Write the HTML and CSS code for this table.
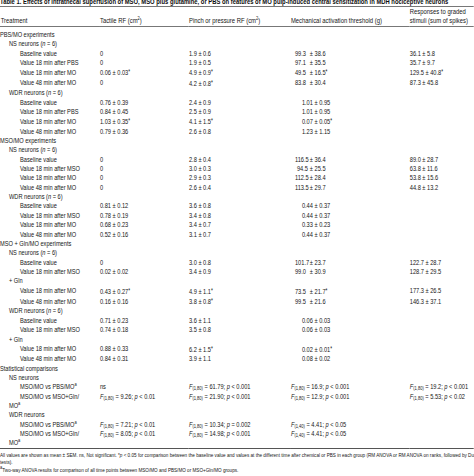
FILE: index.html
```html
<!DOCTYPE html>
<html>
<head>
<meta charset="utf-8">
<link rel="stylesheet" href="styles.css">
</head>
<body>
<div class="sheet">
<div class="page">
  <div class="title">Table 1. Effects of intrathecal superfusion of MSO, MSO plus glutamine, or PBS on features of MO pulp-induced central sensitization in MDH nociceptive neurons</div>
  <table class="data">
    <colgroup>
      <col class="c1"><col class="c2"><col class="c3"><col class="c4"><col class="c5">
    </colgroup>
    <thead>
      <tr>
        <th>Treatment</th>
        <th>Tactile RF (cm<sup>2</sup>)</th>
        <th>Pinch or pressure RF (cm<sup>2</sup>)</th>
        <th>Mechanical activation threshold (g)</th>
        <th>Responses to graded<br>stimuli (sum of spikes)</th>
      </tr>
    </thead>
    <tbody>
      <tr class="first"><td class="l0">PBS/MO experiments</td><td></td><td></td><td></td><td></td></tr>
      <tr><td class="l1">NS neurons (<i>n</i> = 6)</td><td></td><td></td><td></td><td></td></tr>
      <tr><td class="l2">Baseline value</td><td>0</td><td>1.9 ± 0.6</td><td class="th"><span class="n">99.3</span>± 38.6</td><td>36.1 ± 5.8</td></tr>
      <tr><td class="l2">Value 18 min after PBS</td><td>0</td><td>1.9 ± 0.5</td><td class="th"><span class="n">97.1</span>± 35.5</td><td>35.7 ± 9.7</td></tr>
      <tr><td class="l2">Value 18 min after MO</td><td>0.06 ± 0.03<span class="ast">*</span></td><td>4.9 ± 0.9<span class="ast">*</span></td><td class="th"><span class="n">49.5</span>± 16.5<span class="ast">*</span></td><td>129.5 ± 40.8<span class="ast">*</span></td></tr>
      <tr><td class="l2">Value 48 min after MO</td><td>0</td><td>4.2 ± 0.8<span class="ast">*</span></td><td class="th"><span class="n">83.8</span>± 30.4</td><td>87.3 ± 45.8</td></tr>
      <tr><td class="l1">WDR neurons (<i>n</i> = 6)</td><td></td><td></td><td></td><td></td></tr>
      <tr><td class="l2">Baseline value</td><td>0.76 ± 0.39</td><td>2.4 ± 0.9</td><td class="sm">1.01 ± 0.95</td><td></td></tr>
      <tr><td class="l2">Value 18 min after PBS</td><td>0.84 ± 0.45</td><td>2.5 ± 0.9</td><td class="sm">1.01 ± 0.95</td><td></td></tr>
      <tr><td class="l2">Value 18 min after MO</td><td>1.03 ± 0.35<span class="ast">*</span></td><td>4.1 ± 1.5<span class="ast">*</span></td><td class="sm">0.07 ± 0.05<span class="ast">*</span></td><td></td></tr>
      <tr><td class="l2">Value 48 min after MO</td><td>0.79 ± 0.36</td><td>2.6 ± 0.8</td><td class="sm">1.23 ± 1.15</td><td></td></tr>
      <tr><td class="l0">MSO/MO experiments</td><td></td><td></td><td></td><td></td></tr>
      <tr><td class="l1">NS neurons (<i>n</i> = 6)</td><td></td><td></td><td></td><td></td></tr>
      <tr><td class="l2">Baseline value</td><td>0</td><td>2.8 ± 0.4</td><td class="th"><span class="n">116.5</span>± 36.4</td><td>89.0 ± 28.7</td></tr>
      <tr><td class="l2">Value 18 min after MSO</td><td>0</td><td>3.0 ± 0.3</td><td class="th"><span class="n r">94.5</span>± 25.5</td><td>63.8 ± 11.6</td></tr>
      <tr><td class="l2">Value 18 min after MO</td><td>0</td><td>2.9 ± 0.3</td><td class="th"><span class="n">112.5</span>± 28.4</td><td>53.8 ± 15.6</td></tr>
      <tr><td class="l2">Value 48 min after MO</td><td>0</td><td>2.6 ± 0.4</td><td class="th"><span class="n">113.5</span>± 29.7</td><td>44.8 ± 13.2</td></tr>
      <tr><td class="l1">WDR neurons (<i>n</i> = 6)</td><td></td><td></td><td></td><td></td></tr>
      <tr><td class="l2">Baseline value</td><td>0.81 ± 0.12</td><td>3.6 ± 0.8</td><td class="sm">0.44 ± 0.37</td><td></td></tr>
      <tr><td class="l2">Value 18 min after MSO</td><td>0.78 ± 0.19</td><td>3.4 ± 0.8</td><td class="sm">0.44 ± 0.37</td><td></td></tr>
      <tr><td class="l2">Value 18 min after MO</td><td>0.68 ± 0.23</td><td>3.4 ± 0.7</td><td class="sm">0.33 ± 0.23</td><td></td></tr>
      <tr><td class="l2">Value 48 min after MO</td><td>0.52 ± 0.16</td><td>3.1 ± 0.7</td><td class="sm">0.44 ± 0.37</td><td></td></tr>
      <tr><td class="l0">MSO + Gln/MO experiments</td><td></td><td></td><td></td><td></td></tr>
      <tr><td class="l1">NS neurons (<i>n</i> = 6)</td><td></td><td></td><td></td><td></td></tr>
      <tr><td class="l2">Baseline value</td><td>0</td><td>3.0 ± 0.8</td><td class="th"><span class="n">101.7</span>± 23.7</td><td>122.7 ± 28.7</td></tr>
      <tr><td class="l2">Value 18 min after MSO</td><td>0.02 ± 0.02</td><td>3.4 ± 0.9</td><td class="th"><span class="n">99.0</span>± 30.9</td><td>128.7 ± 29.5</td></tr>
      <tr><td class="l1">+ Gln</td><td></td><td></td><td></td><td></td></tr>
      <tr><td class="l2">Value 18 min after MO</td><td>0.43 ± 0.27<span class="ast">*</span></td><td>4.9 ± 1.1<span class="ast">*</span></td><td class="th"><span class="n">73.5</span>± 21.7<span class="ast">*</span></td><td>177.3 ± 26.5</td></tr>
      <tr><td class="l2">Value 48 min after MO</td><td>0.16 ± 0.16</td><td>3.8 ± 0.8<span class="ast">*</span></td><td class="th"><span class="n">99.5</span>± 21.6</td><td>146.3 ± 37.1</td></tr>
      <tr><td class="l1">WDR neurons (<i>n</i> = 6)</td><td></td><td></td><td></td><td></td></tr>
      <tr><td class="l2">Baseline value</td><td>0.71 ± 0.23</td><td>3.6 ± 1.1</td><td class="sm">0.06 ± 0.03</td><td></td></tr>
      <tr><td class="l2">Value 18 min after MSO</td><td>0.74 ± 0.18</td><td>3.5 ± 0.8</td><td class="sm">0.06 ± 0.03</td><td></td></tr>
      <tr><td class="l1">+ Gln</td><td></td><td></td><td></td><td></td></tr>
      <tr><td class="l2">Value 18 min after MO</td><td>0.88 ± 0.33</td><td>6.2 ± 1.5<span class="ast">*</span></td><td class="sm">0.02 ± 0.01<span class="ast">*</span></td><td></td></tr>
      <tr><td class="l2">Value 48 min after MO</td><td>0.84 ± 0.31</td><td>3.9 ± 1.1</td><td class="sm">0.08 ± 0.02</td><td></td></tr>
      <tr><td class="l0">Statistical comparisons</td><td></td><td></td><td></td><td></td></tr>
      <tr><td class="l1">NS neurons</td><td></td><td></td><td></td><td></td></tr>
      <tr><td class="l2">MSO/MO vs PBS/MO<sup>a</sup></td><td>ns</td><td><i>F</i><sub>(1,80)</sub> = 61.79; <i>p</i> &lt; 0.001</td><td class="st"><i>F</i><sub>(1,80)</sub> = 16.9; <i>p</i> &lt; 0.001</td><td><i>F</i><sub>(1,80)</sub> = 19.2; <i>p</i> &lt; 0.001</td></tr>
      <tr><td class="l2">MSO/MO vs MSO+Gln/</td><td><i>F</i><sub>(1,80)</sub> = 9.26; <i>p</i> &lt; 0.01</td><td><i>F</i><sub>(1,80)</sub> = 21.90; <i>p</i> &lt; 0.001</td><td class="st"><i>F</i><sub>(1,80)</sub> = 12.9; <i>p</i> &lt; 0.001</td><td><i>F</i><sub>(1,80)</sub> = 5.53; <i>p</i> &lt; 0.02</td></tr>
      <tr><td class="l1">MO<sup>a</sup></td><td></td><td></td><td></td><td></td></tr>
      <tr><td class="l1">WDR neurons</td><td></td><td></td><td></td><td></td></tr>
      <tr><td class="l2">MSO/MO vs PBS/MO<sup>a</sup></td><td><i>F</i><sub>(1,80)</sub> = 7.21; <i>p</i> &lt; 0.01</td><td><i>F</i><sub>(1,80)</sub> = 10.34; <i>p</i> = 0.002</td><td class="st"><i>F</i><sub>(1,40)</sub> = 4.41; <i>p</i> &lt; 0.05</td><td></td></tr>
      <tr><td class="l2">MSO/MO vs MSO+Gln/</td><td><i>F</i><sub>(1,80)</sub> = 8.05; <i>p</i> &lt; 0.01</td><td><i>F</i><sub>(1,80)</sub> = 14.98; <i>p</i> &lt; 0.001</td><td class="st"><i>F</i><sub>(1,40)</sub> = 4.41; <i>p</i> &lt; 0.05</td><td></td></tr>
      <tr class="last"><td class="l1">MO<sup>a</sup></td><td></td><td></td><td></td><td></td></tr>
    </tbody>
  </table>
  <div class="notes">
    <p class="note">All values are shown as mean ± SEM. ns, Not significant. *<i>p</i> &lt; 0.05 for comparison between the baseline value and values at the different time after chemical or PBS in each group (RM ANOVA or RM ANOVA on ranks, followed by Dunnett's<br>tests).</p>
    <p class="note"><sup>a</sup>Two-way ANOVA results for comparison of all time points between MSO/MO and PBS/MO or MSO+Gln/MO groups.</p>
  </div>
</div>
</div>
</body>
</html>
```

FILE: styles.css
```css
html, body {
  margin: 0;
  padding: 0;
  background: #ffffff;
  overflow: hidden;
}

.sheet {
  width: 474px;
  overflow: hidden;
}

/* No condensed face is installed, so the whole sheet is narrowed horizontally
   to reproduce the condensed typesetting of the original table. */
.page {
  width: 635px;
  transform: scaleX(0.746);
  transform-origin: 0 0;
  font-family: "Liberation Sans", Arial, sans-serif;
  color: #151515;
}

.title {
  margin-top: -3px;
  font-size: 7.85px;
  font-weight: bold;
  line-height: 9px;
  white-space: nowrap;
  color: #0d0d0d;
  border-bottom: 1px solid #777;
}

.data {
  width: 635px;
  table-layout: fixed;
  border-collapse: collapse;
  font-size: 7.6px;
}

.c1 { width: 134px; }
.c2 { width: 119.3px; }
.c3 { width: 136.7px; }
.c4 { width: 159.3px; }
.c5 { width: 85.7px; }

.data th {
  font-weight: normal;
  font-size: 7.9px;
  text-align: left;
  vertical-align: bottom;
  padding: 0 0 1px 0;
  line-height: 9px;
  white-space: nowrap;
  border-bottom: 1px solid #777;
}

.data th:first-child { padding-left: 1px; }

.data td {
  padding: 0;
  height: 9.36px;
  line-height: 9.36px;
  white-space: nowrap;
  vertical-align: middle;
}

.data tr.first td { padding-top: 3px; }
.data tr.last td { border-bottom: 1px solid #555; }

.l0 { padding-left: 0; }
.data td.l1 { padding-left: 12px; }
.data td.l2 { padding-left: 26.8px; }

.data td.th { padding-left: 5.4px; }
.data td.sm { padding-left: 14.7px; }
.data td.st { padding-left: 0; }

.n {
  display: inline-block;
  width: 20px;
}
.n.r { padding-left: 2.7px; width: 17.3px; }

.ast {
  font-size: 6.5px;
  vertical-align: 1px;
}

sup {
  font-size: 5.4px;
  line-height: 0;
  vertical-align: 3px;
}

sub {
  font-size: 5.4px;
  line-height: 0;
  vertical-align: -1px;
}

.notes {
  padding-top: 2px;
  font-size: 6.2px;
}

.note {
  margin: 0;
  line-height: 7px;
  white-space: nowrap;
}

.note + .note { margin-top: 1px; }
```
